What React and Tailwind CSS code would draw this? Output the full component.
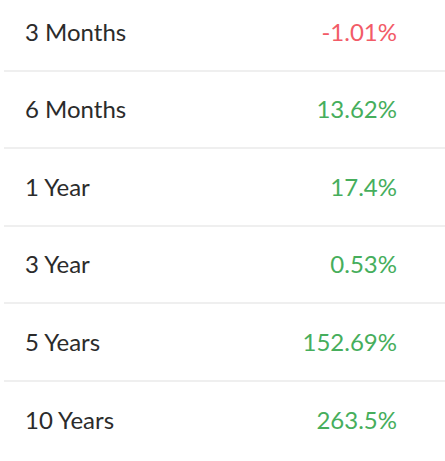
export default function App() {
  const rows = [
    ["3 Months", "-1.01%", false],
    ["6 Months", "13.62%", true],
    ["1 Year", "17.4%", true],
    ["3 Year", "0.53%", true],
    ["5 Years", "152.69%", true],
    ["10 Years", "263.5%", true],
  ];
  return (
    <div className="w-[445px] h-[461px] bg-white overflow-hidden" style={{ fontFamily: "Lato, 'Open Sans', sans-serif" }}>
      <div className="ml-1 -mt-[6px]">
        {rows.map(([label, value, pos], i) => (
          <div
            key={label}
            className={`flex items-center justify-between h-[77.5px] pl-[21px] pr-[48px] ${i < rows.length - 1 ? "border-b-2 border-[#efefef]" : ""}`}
          >
            <span className="text-[24px] text-[#2b2b2b]">{label}</span>
            <span className={`text-[24px] ${pos ? "text-[#46ae5c]" : "text-[#f25b67]"}`}>{value}</span>
          </div>
        ))}
      </div>
    </div>
  );
}
